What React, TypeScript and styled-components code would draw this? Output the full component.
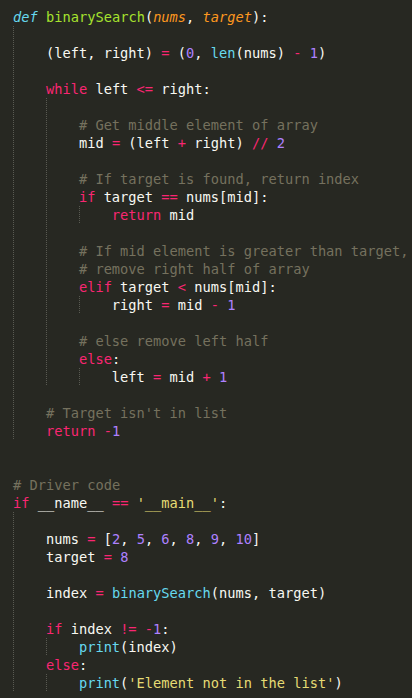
import React from "react";
import styled, { createGlobalStyle, css } from "styled-components";

const Global = createGlobalStyle`
  html, body { margin: 0; padding: 0; background: #272822; }
  body { width: 412px; height: 698px; overflow: hidden; }
`;

type Kind = "t" | "k" | "o" | "d" | "f" | "p" | "b" | "n" | "s" | "c";
type Tok = [Kind, string];
type LineData = { indent: number; guides?: number; toks?: Tok[] };

const colors: Record<Kind, string> = {
  t: "#f8f8f2",
  k: "#f92672",
  o: "#f92672",
  d: "#66d9ef",
  f: "#a6e22e",
  p: "#fd971f",
  b: "#66d9ef",
  n: "#ae81ff",
  s: "#e6db74",
  c: "#75715e",
};

const Editor = styled.div`
  box-sizing: border-box;
  width: 412px;
  height: 698px;
  padding: 8px 0 0 13px;
  background: #272822;
  font-family: "DejaVu Sans Mono", "Liberation Mono", monospace;
  font-size: 13.7px;
  line-height: 18px;
  overflow: hidden;
  white-space: pre;
`;

const Row = styled.div`
  display: flex;
  height: 18px;
  align-items: stretch;
`;

const Indent = styled.span<{ $guide: boolean }>`
  display: inline-block;
  width: 4ch;
  flex: none;
  ${(p) =>
    p.$guide &&
    css`
      background-image: linear-gradient(to bottom, #595a52 0 1px, transparent 1px 2px);
      background-size: 1px 2px;
      background-repeat: repeat-y;
      background-position: 0 0;
    `}
`;

const Tk = styled.span<{ $k: Kind }>`
  color: ${(p) => colors[p.$k]};
  font-style: ${(p) => (p.$k === "d" || p.$k === "p" ? "italic" : "normal")};
`;

const L = (indent: number, ...toks: Tok[]): LineData => ({ indent, guides: indent, toks });
const B = (guides: number): LineData => ({ indent: guides, guides });

const lines: LineData[] = [
  L(0, ["d", "def"], ["t", " "], ["f", "binarySearch"], ["t", "("], ["p", "nums"], ["t", ", "], ["p", "target"], ["t", "):"]),
  B(1),
  L(1, ["t", "(left, right) "], ["o", "="], ["t", " ("], ["n", "0"], ["t", ", "], ["b", "len"], ["t", "(nums) "], ["o", "-"], ["t", " "], ["n", "1"], ["t", ")"]),
  B(1),
  L(1, ["k", "while"], ["t", " left "], ["o", "<="], ["t", " right:"]),
  B(2),
  L(2, ["c", "# Get middle element of array"]),
  L(2, ["t", "mid "], ["o", "="], ["t", " (left "], ["o", "+"], ["t", " right) "], ["o", "//"], ["t", " "], ["n", "2"]),
  B(2),
  L(2, ["c", "# If target is found, return index"]),
  L(2, ["k", "if"], ["t", " target "], ["o", "=="], ["t", " nums[mid]:"]),
  L(3, ["k", "return"], ["t", " mid"]),
  B(2),
  L(2, ["c", "# If mid element is greater than target,"]),
  L(2, ["c", "# remove right half of array"]),
  L(2, ["k", "elif"], ["t", " target "], ["o", "<"], ["t", " nums[mid]:"]),
  L(3, ["t", "right "], ["o", "="], ["t", " mid "], ["o", "-"], ["t", " "], ["n", "1"]),
  B(2),
  L(2, ["c", "# else remove left half"]),
  L(2, ["k", "else"], ["t", ":"]),
  L(3, ["t", "left "], ["o", "="], ["t", " mid "], ["o", "+"], ["t", " "], ["n", "1"]),
  B(1),
  L(1, ["c", "# Target isn't in list"]),
  L(1, ["k", "return"], ["t", " "], ["o", "-"], ["n", "1"]),
  B(0),
  B(0),
  L(0, ["c", "# Driver code"]),
  L(0, ["k", "if"], ["t", " __name__ "], ["o", "=="], ["t", " "], ["s", "'__main__'"], ["t", ":"]),
  B(1),
  L(1, ["t", "nums "], ["o", "="], ["t", " ["], ["n", "2"], ["t", ", "], ["n", "5"], ["t", ", "], ["n", "6"], ["t", ", "], ["n", "8"], ["t", ", "], ["n", "9"], ["t", ", "], ["n", "10"], ["t", "]"]),
  L(1, ["t", "target "], ["o", "="], ["t", " "], ["n", "8"]),
  B(1),
  L(1, ["t", "index "], ["o", "="], ["t", " "], ["b", "binarySearch"], ["t", "(nums, target)"]),
  B(1),
  L(1, ["k", "if"], ["t", " index "], ["o", "!="], ["t", " "], ["o", "-"], ["n", "1"], ["t", ":"]),
  L(2, ["b", "print"], ["t", "(index)"]),
  L(1, ["k", "else"], ["t", ":"]),
  L(2, ["b", "print"], ["t", "("], ["s", "'Element not in the list'"], ["t", ")"]),
];

export default function App() {
  return (
    <>
      <Global />
      <Editor>
        {lines.map((ln, i) => (
          <Row key={i}>
            {Array.from({ length: ln.indent }).map((_, j) => (
              <Indent key={j} $guide={j < (ln.guides ?? 0)} />
            ))}
            {(ln.toks ?? []).map(([k, s], j) => (
              <Tk key={j} $k={k}>
                {s}
              </Tk>
            ))}
          </Row>
        ))}
      </Editor>
    </>
  );
}
